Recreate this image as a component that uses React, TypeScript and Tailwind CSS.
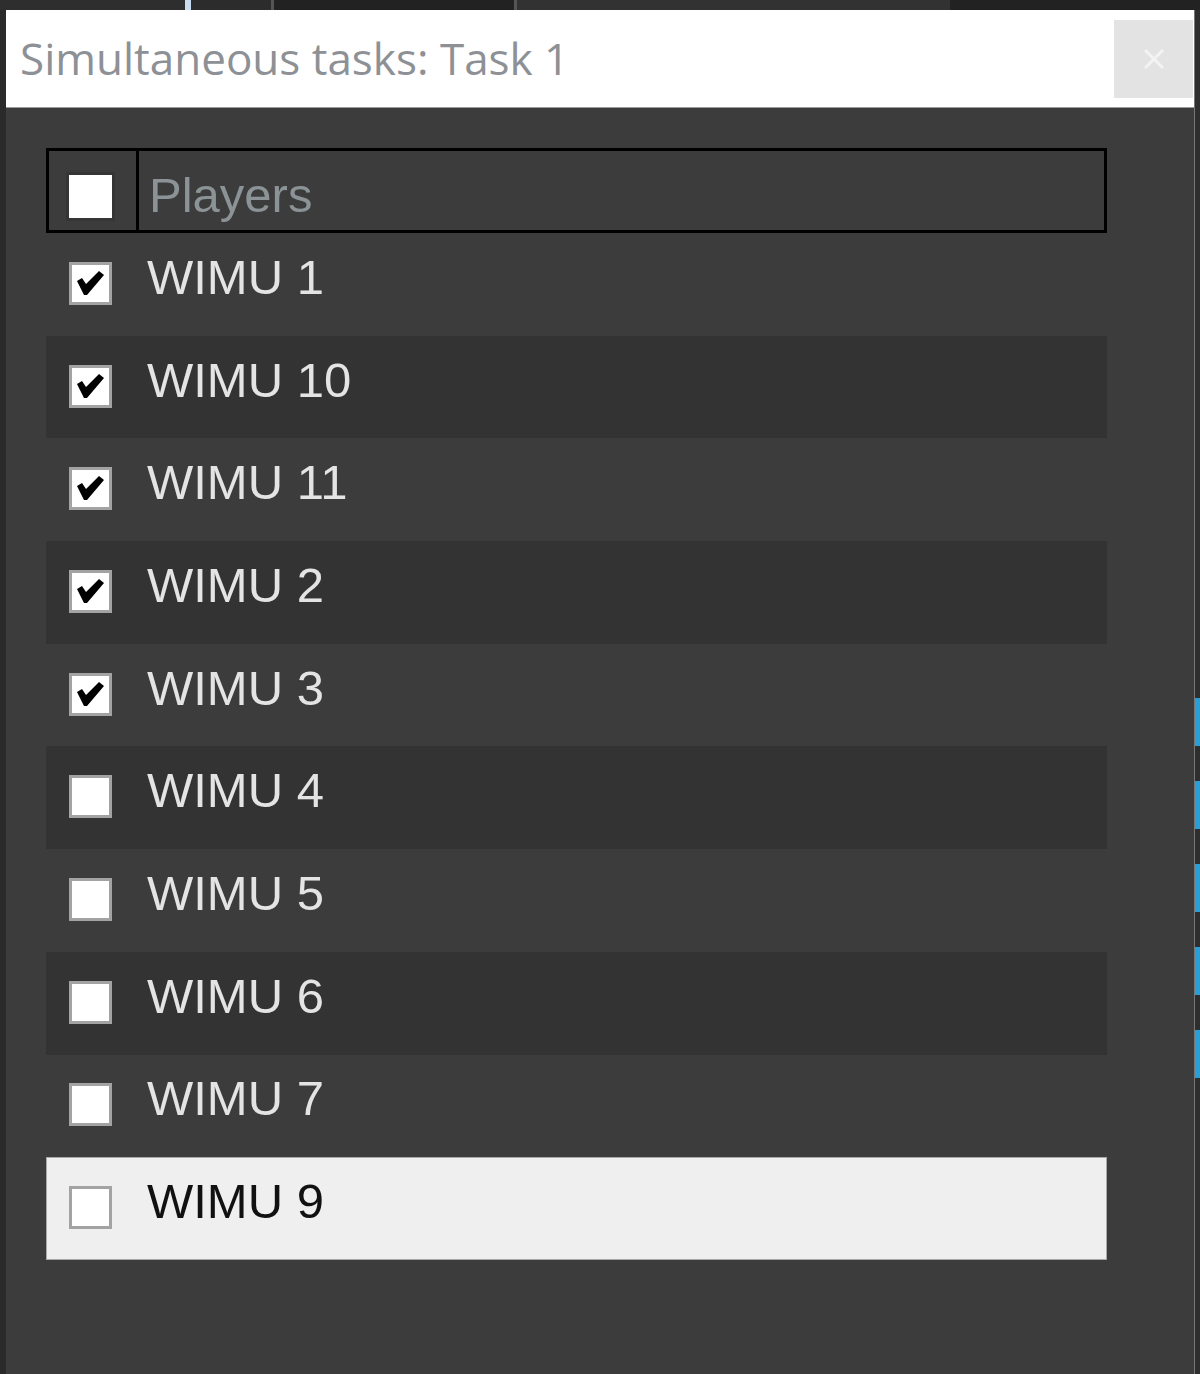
import React, { FC } from 'react';

interface Player {
  name: string;
  checked: boolean;
}

const players: Player[] = [
  { name: 'WIMU 1', checked: true },
  { name: 'WIMU 10', checked: true },
  { name: 'WIMU 11', checked: true },
  { name: 'WIMU 2', checked: true },
  { name: 'WIMU 3', checked: true },
  { name: 'WIMU 4', checked: false },
  { name: 'WIMU 5', checked: false },
  { name: 'WIMU 6', checked: false },
  { name: 'WIMU 7', checked: false },
  { name: 'WIMU 9', checked: false },
];

const CheckBox: FC<{ checked: boolean; dark?: boolean }> = ({ checked, dark }) => (
  <div
    className={`shrink-0 bg-white border-[3px] ${
      dark ? 'w-[49px] h-[49px] border-[#353535]' : 'w-[43px] h-[43px] border-[#a3a3a3]'
    }`}
  >
    {checked && (
      <svg viewBox="0 0 37 37" className="w-full h-full">
        <path d="M5 16 L10 13 L14 19 L27 6 L32 10 L15 30 L12 30 Z" fill="#000" />
      </svg>
    )}
  </div>
);

const Row: FC<{ player: Player; index: number }> = ({ player, index }) => {
  const selected = index === players.length - 1;
  const bg = selected
    ? 'bg-[#efefef] border border-[#a8a8a8]'
    : index % 2 === 1
    ? 'bg-[#333333]'
    : 'bg-[#3c3c3c]';
  return (
    <div className={`flex items-center h-[102.7px] ${selected ? 'pl-[22px]' : 'pl-[23px]'} ${bg}`}>
      <div className="-mt-[2px]">
        <CheckBox checked={player.checked} />
      </div>
      <span
        className={`ml-[35px] -mt-[14px] text-[49px] leading-none ${
          selected ? 'text-[#111111]' : 'text-[#e4e4e4]'
        }`}
        style={{ fontFamily: '"Liberation Sans", Arial, sans-serif' }}
      >
        {player.name}
      </span>
    </div>
  );
};

export default function App() {
  return (
    <div className="w-[1200px] h-[1374px] bg-[#262626] flex flex-col overflow-hidden">
      <div className="h-[10px] shrink-0 flex">
        <div className="w-[185px] bg-[#2e2e2e]" />
        <div className="w-[6px] bg-[#c9dcef]" />
        <div className="w-[80px] bg-[#2c2c2c]" />
        <div className="w-[3px] bg-[#555555]" />
        <div className="w-[240px] bg-[#222222]" />
        <div className="w-[3px] bg-[#555555]" />
        <div className="flex-1 bg-[#323232]" />
        <div className="w-[250px] bg-[#222222]" />
      </div>
      <div className="flex flex-1 min-h-0">
        <div className="w-[6px] bg-[#2a2a2a] shrink-0" />
        <div className="flex-1 flex flex-col border-r border-[#777777]">
          <div className="h-[98px] bg-white flex items-center border-b border-[#9a9a9a] shrink-0">
            <span
              className="pl-[14px] flex-1 text-[44px] text-[#8d9196] leading-none -mt-[2px]"
              style={{ fontFamily: '"Open Sans", "Noto Sans", sans-serif' }}
            >
              Simultaneous tasks: Task 1
            </span>
            <div className="w-[79px] h-[78px] bg-[#e3e3e3] mr-[1px] flex items-center justify-center">
              <svg viewBox="0 0 24 24" className="w-[24px] h-[24px]">
                <path d="M3 3 L21 21 M21 3 L3 21" stroke="#f3f3f3" strokeWidth="3" />
              </svg>
            </div>
          </div>
          <div className="flex-1 bg-[#3c3c3c] pt-[40px] pl-[40px] pr-[87px]">
            <div className="flex h-[85px] border-[3px] border-black">
              <div className="w-[90px] border-r-[3px] border-black flex items-center justify-center pr-[4px] pt-[11px]">
                <CheckBox checked={false} dark />
              </div>
              <span
                className="pl-[10px] pt-[20px] text-[49px] leading-none text-[#8c9396]"
                style={{ fontFamily: '"Liberation Sans", Arial, sans-serif' }}
              >
                Players
              </span>
            </div>
            {players.map((p, i) => (
              <Row key={p.name} player={p} index={i} />
            ))}
          </div>
        </div>
        <div className="w-[5px] bg-[#2e2e2e] shrink-0 flex flex-col pt-[688px] gap-[35px]">
          <div className="h-[48px] bg-[#2a9fd6]" />
          <div className="h-[48px] bg-[#2a9fd6]" />
          <div className="h-[48px] bg-[#2a9fd6]" />
          <div className="h-[48px] bg-[#2a9fd6]" />
          <div className="h-[48px] bg-[#2a9fd6]" />
        </div>
      </div>
    </div>
  );
}
